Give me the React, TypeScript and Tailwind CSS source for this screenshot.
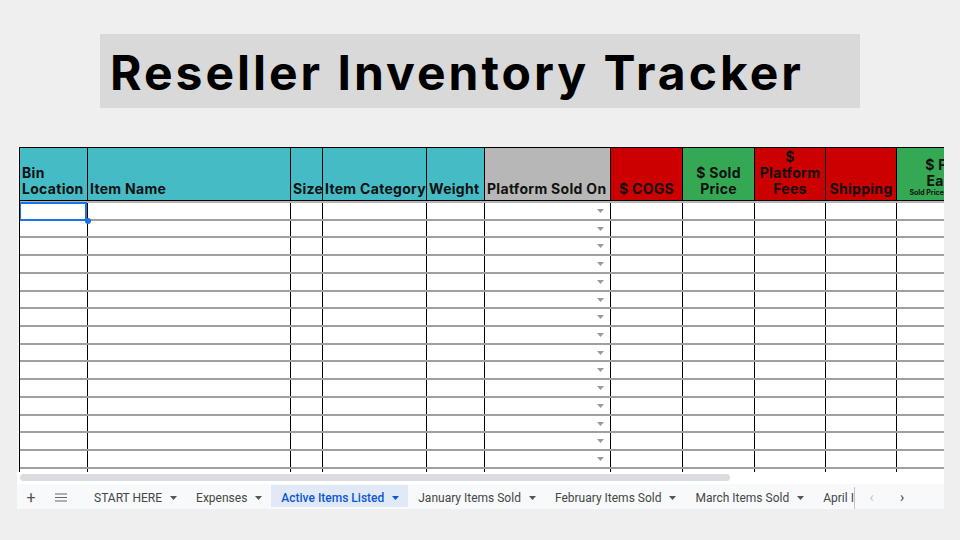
import type { ReactNode } from 'react'

type Col = {
  w: number
  lines: string[]
  bg: string
  center?: boolean
  note?: string
  dropdown?: boolean
}

const cols: Col[] = [
  { w: 68, lines: ['Bin', 'Location'], bg: 'bg-[#45bbc6]' },
  { w: 203, lines: ['Item Name'], bg: 'bg-[#45bbc6]' },
  { w: 32, lines: ['Size'], bg: 'bg-[#45bbc6]' },
  { w: 104, lines: ['Item Category'], bg: 'bg-[#45bbc6]' },
  { w: 58, lines: ['Weight'], bg: 'bg-[#45bbc6]' },
  { w: 126, lines: ['Platform Sold On'], bg: 'bg-[#b7b7b7]', dropdown: true },
  { w: 72, lines: ['$ COGS'], bg: 'bg-[#cc0000]', center: true },
  { w: 72, lines: ['$ Sold', 'Price'], bg: 'bg-[#34a853]', center: true },
  { w: 71, lines: ['$', 'Platform', 'Fees'], bg: 'bg-[#cc0000]', center: true },
  { w: 71, lines: ['Shipping'], bg: 'bg-[#cc0000]', center: true },
  {
    w: 110,
    lines: ['$ Profit', 'Earned'],
    bg: 'bg-[#34a853]',
    center: true,
    note: 'Sold Price - COGS - Fees',
  },
]

const tabs = [
  'START HERE',
  'Expenses',
  'Active Items Listed',
  'January Items Sold',
  'February Items Sold',
  'March Items Sold',
]

const ROWS = 15

function Caret({ className }: { className: string }) {
  return (
    <svg width="7" height="4" viewBox="0 0 7 4" className={className}>
      <path d="M0 0h7L3.5 4z" fill="currentColor" />
    </svg>
  )
}

function HeaderCell({ col }: { col: Col }) {
  return (
    <div
      className={`${col.bg} shrink-0 h-full border-r border-black flex flex-col justify-end px-[2px] pb-[3px] ${
        col.center ? 'items-center text-center' : 'items-start'
      }`}
      style={{ width: col.w }}
    >
      {col.lines.map(l => (
        <span key={l} className="leading-[16px] whitespace-nowrap">{l}</span>
      ))}
      {col.note && (
        <span className="text-[7px] leading-[8px] whitespace-nowrap tracking-normal">{col.note}</span>
      )}
    </div>
  )
}

function Row({ index, children }: { index: number; children?: ReactNode }) {
  return (
    <div className="flex h-[17.73px] border-b-2 border-[#a0a0a0]">
      {cols.map((c, ci) => (
        <div
          key={ci}
          className="shrink-0 h-full border-r border-black relative"
          style={{ width: c.w }}
        >
          {c.dropdown && (
            <Caret className="absolute right-[6px] top-[6px] text-[#9a9a9a]" />
          )}
          {index === 0 && ci === 0 && (
            <>
              <div className="absolute -left-px -top-px right-0 -bottom-[2px] border-2 border-[#1a73e8]" />
              <div className="absolute -right-[4px] -bottom-[5px] w-[6px] h-[6px] rounded-full bg-[#1a73e8] z-10" />
            </>
          )}
        </div>
      ))}
      {children}
    </div>
  )
}

export default function App() {
  return (
    <div className="w-[960px] h-[540px] bg-[#efefef] overflow-hidden pt-[34px]">
      <div className="ml-[100px] w-[760px] h-[74px] bg-[#d9d9d9] flex items-center pl-[10px] pt-[4px]">
        <h1
          className="text-[48px] font-bold text-black tracking-[3px] whitespace-nowrap"
          style={{ fontFamily: 'Inter, "Noto Sans", sans-serif' }}
        >
          Reseller Inventory Tracker
        </h1>
      </div>

      <div className="ml-[17px] mt-[39px] w-[927px] bg-white flex flex-col">
        <div className="flex">
          <div className="w-[2px] shrink-0 bg-[#f1f3f4]" />
          <div
            className="w-[925px] overflow-hidden border-l border-black text-[14px] tracking-[0.3px] font-bold text-[#111]"
            style={{ fontFamily: 'Inter, "Open Sans", sans-serif' }}
          >
            <div className="w-[1100px]">
              <div className="flex h-[54px] border-t border-b border-black">
                {cols.map((c, i) => (
                  <HeaderCell key={i} col={c} />
                ))}
              </div>
              <div className="h-[2px] bg-[#b5b5b5]" />
              {Array.from({ length: ROWS }).map((_, i) => (
                <Row key={i} index={i} />
              ))}
              <div className="flex h-[3px]">
                {cols.map((c, ci) => (
                  <div key={ci} className="shrink-0 h-full border-r border-black" style={{ width: c.w }} />
                ))}
              </div>
            </div>
          </div>
        </div>

        {/* horizontal scrollbar */}
        <div className="h-[12px] flex items-center pl-[3px]">
          <div className="w-[710px] h-[7px] rounded-full bg-[#dadce0]" />
        </div>

        {/* sheet tabs */}
        <div
          className="h-[25px] pt-[3px] bg-[#f8f9fa] flex items-center text-[12px] text-[#444746]"
          style={{ fontFamily: 'Roboto, "Liberation Sans", sans-serif' }}
        >
          <div className="w-[26px] text-center text-[16px] leading-none text-[#555] ml-[1px]">+</div>
          <div className="w-[34px] flex justify-center">
            <svg width="12" height="9" viewBox="0 0 12 9">
              <path d="M0 1h12M0 4.5h12M0 8h12" stroke="#666" strokeWidth="1.2" />
            </svg>
          </div>
          <div className="w-[6px]" />
          {tabs.map(t => {
            const active = t === 'Active Items Listed'
            return (
              <div
                key={t}
                className={`h-full flex items-center gap-[8px] pl-[10px] pr-[9px] ${
                  active ? 'bg-[#e1e9f7] text-[#0b57d0] font-medium -mt-[3px] h-[25px] pt-[3px]' : ''
                }`}
              >
                <span className="whitespace-nowrap">{t}</span>
                <Caret className={active ? 'text-[#0b57d0]' : 'text-[#555]'} />
              </div>
            )
          })}
          <div className="h-full flex items-center pl-[10px] w-[42px] overflow-hidden border-r border-[#c4c4c4] whitespace-nowrap">
            April Items Sold
          </div>
          <div className="w-[33px] text-center text-[#c4c7c5] text-[14px]">‹</div>
          <div className="w-[28px] text-center text-[#444746] text-[14px]">›</div>
        </div>
      </div>
    </div>
  )
}
